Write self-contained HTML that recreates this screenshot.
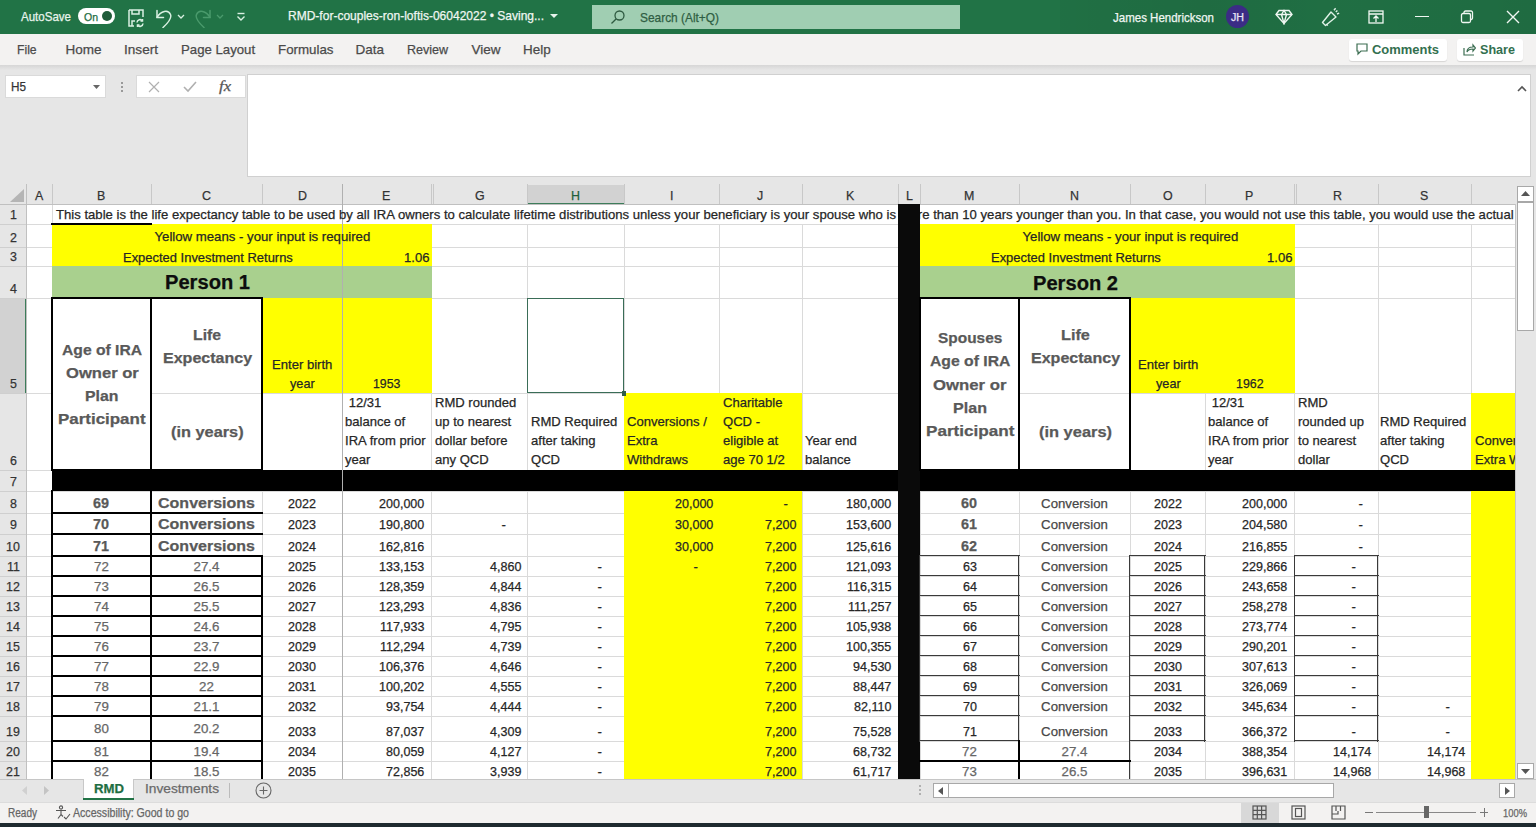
<!DOCTYPE html><html><head><meta charset="utf-8"><style>
html,body{margin:0;padding:0;width:1536px;height:827px;overflow:hidden;background:#fff;position:relative}
body>div,body>svg,div>div,div>svg{position:absolute}
.t{white-space:pre;line-height:1;font-family:"Liberation Sans",sans-serif;-webkit-text-stroke:0.25px currentColor}
</style></head><body>
<div style="left:0px;top:0px;width:1536px;height:34px;background:#217346;"></div>
<div style="left:1060px;top:0px;width:476px;height:34px;background:linear-gradient(90deg,rgba(0,0,0,0.03),rgba(0,0,0,0.07) 30%,rgba(0,0,0,0.04) 60%,rgba(0,0,0,0.07));"></div>
<div style="left:0px;top:34px;width:1536px;height:31px;background:#f3f2f1;"></div>
<div style="left:0px;top:65px;width:1536px;height:122px;background:#e6e6e6;"></div>
<div style="left:0px;top:65px;width:1536px;height:5px;background:linear-gradient(#d6d6d6,#e6e6e6);"></div>
<div class="t" style="left:21.00px;top:10.00px;font-size:13px;color:#e8f3ec;transform:scaleX(0.8870);transform-origin:0 0;">AutoSave</div>
<div style="left:78px;top:8px;width:37px;height:16px;border-radius:8px;background:#fff"></div>
<div class="t" style="left:84.00px;top:11.77px;font-size:11.5px;color:#1f6e43;transform:scaleX(0.9126);transform-origin:0 0;">On</div>
<div style="left:102px;top:11px;width:10px;height:10px;border-radius:5px;background:#1f5c3a"></div>
<svg style="left:126px;top:8px" width="20" height="20" viewBox="0 0 20 20" fill="none" stroke="#d9f0e2" stroke-width="1.5">
<path d="M3 2h14v7"/><path d="M3 2v16h5"/><path d="M6 2v4h7V2"/><path d="M6 18v-5h3"/><path d="M11 14.5a3 3 0 0 1 5.5-1.5M17 15.5a3 3 0 0 1-5.5 1.5"/><path d="M16.5 11v2h-2M11.5 19v-2h2"/></svg>
<svg style="left:155px;top:8px" width="18" height="20" viewBox="0 0 18 20" fill="none" stroke="#d9f0e2" stroke-width="1.5" stroke-linecap="round">
<path d="M2 2.5v7h6.5"/><path d="M2 9.3C6 3 13 1 15.5 6.5C17 10 13 15 8 19.5"/></svg>
<svg style="left:177px;top:14px" width="8" height="6" viewBox="0 0 8 6" fill="none" stroke="#d9f0e2" stroke-width="1.3"><path d="M1 1l3 3 3-3"/></svg>
<svg style="left:194px;top:8px" width="18" height="20" viewBox="0 0 18 20" fill="none" stroke="#4a9a6c" stroke-width="1.5" stroke-linecap="round">
<path d="M16 2.5v7H9.5"/><path d="M16 9.3C12 3 5 1 2.5 6.5C1 10 5 15 10 19.5"/></svg>
<svg style="left:216px;top:14px" width="8" height="6" viewBox="0 0 8 6" fill="none" stroke="#4a9a6c" stroke-width="1.3"><path d="M1 1l3 3 3-3"/></svg>
<svg style="left:236px;top:12px" width="10" height="10" viewBox="0 0 10 10" fill="none" stroke="#d9f0e2" stroke-width="1.4"><path d="M1.5 1.5h7"/><path d="M1.5 4.5l3.5 3.5 3.5-3.5"/></svg>
<div class="t" style="left:288.00px;top:9.00px;font-size:13px;color:#f0f7f2;transform:scaleX(0.9244);transform-origin:0 0;">RMD-for-couples-ron-loftis-06042022 • Saving...</div>
<svg style="left:550px;top:14px" width="8" height="5" viewBox="0 0 8 5"><path d="M0 0h8L4 4z" fill="#e8f3ec"/></svg>
<div style="left:592px;top:5px;width:368px;height:24px;background:#a0ceb2;"></div>
<svg style="left:610px;top:9px" width="16" height="16" viewBox="0 0 16 16" fill="none" stroke="#2e5a40" stroke-width="1.3"><circle cx="9.5" cy="6.5" r="4.5"/><path d="M6.3 9.7L1.5 14.5"/></svg>
<div class="t" style="left:640.00px;top:10.50px;font-size:13px;color:#2f5e43;transform:scaleX(0.9151);transform-origin:0 0;">Search (Alt+Q)</div>
<div class="t" style="left:1113.00px;top:10.50px;font-size:13px;color:#f0f7f2;transform:scaleX(0.8848);transform-origin:0 0;">James Hendrickson</div>
<div style="left:1226px;top:5px;width:23px;height:23px;border-radius:12px;background:#3b2c85"></div>
<div class="t" style="left:1231.00px;top:12.54px;font-size:10px;color:#e8e4f5;transform:scaleX(1.0637);transform-origin:0 0;">JH</div>
<svg style="left:1275px;top:9px" width="18" height="16" viewBox="0 0 18 16" fill="none" stroke="#f0f7f2" stroke-width="1.4"><path d="M4 1.5h10l3 4-8 9-8-9z"/><path d="M1 5.5h16M6.5 5.5L9 14.5l2.5-9M6.5 5.5L9 1.5l2.5 4"/></svg>
<svg style="left:1321px;top:7px" width="20" height="20" viewBox="0 0 20 20" fill="none" stroke="#e0f2e7" stroke-width="1.4" stroke-linejoin="round"><path d="M1.5 15.5L10 5l5 5-10.5 8.5z"/><path d="M5.5 17l1.2 1.6"/><path d="M13 3.2l1.6-2M16 7l2.2-.8M14.8 5l1.6-1.6"/></svg>
<svg style="left:1368px;top:10px" width="16" height="14" viewBox="0 0 16 14" fill="none" stroke="#f0f7f2" stroke-width="1.3"><rect x="1" y="1" width="14" height="12"/><path d="M1 4h14M8 12V6M5.5 8.5L8 6l2.5 2.5"/></svg>
<div style="left:1415px;top:16px;width:14px;height:1.3px;background:#f0f7f2"></div>
<svg style="left:1460px;top:10px" width="14" height="14" viewBox="0 0 14 14" fill="none" stroke="#f0f7f2" stroke-width="1.3"><rect x="1.5" y="3.5" width="9" height="9" rx="1.5"/><path d="M4 3.5V2.5a1.5 1.5 0 0 1 1.5-1.5H11a1.5 1.5 0 0 1 1.5 1.5V8a1.5 1.5 0 0 1-1.5 1.5h-.5"/></svg>
<svg style="left:1506px;top:10px" width="14" height="14" viewBox="0 0 14 14" stroke="#f0f7f2" stroke-width="1.4"><path d="M1 1l12 12M13 1L1 13"/></svg>
<div class="t" style="left:16.50px;top:42.57px;font-size:13.5px;color:#4a4a4a;transform:scaleX(0.9011);transform-origin:0 0;">File</div>
<div class="t" style="left:65.50px;top:42.57px;font-size:13.5px;color:#4a4a4a;">Home</div>
<div class="t" style="left:124.10px;top:42.57px;font-size:13.5px;color:#4a4a4a;transform:scaleX(1.0070);transform-origin:0 0;">Insert</div>
<div class="t" style="left:181.10px;top:42.57px;font-size:13.5px;color:#4a4a4a;transform:scaleX(0.9774);transform-origin:0 0;">Page Layout</div>
<div class="t" style="left:277.50px;top:42.57px;font-size:13.5px;color:#4a4a4a;transform:scaleX(0.9865);transform-origin:0 0;">Formulas</div>
<div class="t" style="left:355.50px;top:42.57px;font-size:13.5px;color:#4a4a4a;">Data</div>
<div class="t" style="left:407.00px;top:42.57px;font-size:13.5px;color:#4a4a4a;transform:scaleX(0.9285);transform-origin:0 0;">Review</div>
<div class="t" style="left:471.50px;top:42.57px;font-size:13.5px;color:#4a4a4a;">View</div>
<div class="t" style="left:522.90px;top:42.57px;font-size:13.5px;color:#4a4a4a;transform:scaleX(0.9941);transform-origin:0 0;">Help</div>
<div style="left:1349px;top:39px;width:98px;height:22px;background:#fff;border-radius:3px;box-shadow:0 1px 1px rgba(0,0,0,.12)"></div>
<div style="left:1457px;top:39px;width:66px;height:22px;background:#fff;border-radius:3px;box-shadow:0 1px 1px rgba(0,0,0,.12)"></div>
<svg style="left:1356px;top:43px" width="12" height="13" viewBox="0 0 12 13" fill="none" stroke="#3c6e52" stroke-width="1.2"><path d="M1 1h10v7H5l-3 3V8H1z"/></svg>
<div class="t" style="left:1372.00px;top:42.77px;font-size:13.5px;color:#33704f;font-weight:bold;transform:scaleX(0.9604);transform-origin:0 0;-webkit-text-stroke:0;">Comments</div>
<svg style="left:1463px;top:42px" width="13" height="14" viewBox="0 0 13 14" fill="none" stroke="#3c6e52" stroke-width="1.2"><path d="M1 6v7h10"/><path d="M4 10c0-4 3-5 6-5V3l2.5 3L10 9V7c-3 0-5 1-6 3z"/></svg>
<div class="t" style="left:1480.00px;top:42.77px;font-size:13.5px;color:#33704f;font-weight:bold;transform:scaleX(0.9328);transform-origin:0 0;-webkit-text-stroke:0;">Share</div>
<div style="left:6px;top:76px;width:99px;height:21px;background:#fff;box-shadow:0 0 0 1px #dadada"></div>
<div class="t" style="left:11.00px;top:80.92px;font-size:12.5px;color:#333;transform:scaleX(0.9387);transform-origin:0 0;">H5</div>
<svg style="left:93px;top:85px" width="7" height="4" viewBox="0 0 7 4"><path d="M0 0h7L3.5 4z" fill="#666"/></svg>
<div style="left:121px;top:82px;width:2px;height:2px;background:#999"></div><div style="left:121px;top:86px;width:2px;height:2px;background:#999"></div><div style="left:121px;top:90px;width:2px;height:2px;background:#999"></div>
<div style="left:137px;top:76px;width:108px;height:21px;background:#fff;box-shadow:0 0 0 1px #dadada"></div>
<svg style="left:148px;top:81px" width="12" height="12" viewBox="0 0 12 12" stroke="#b0b0b0" stroke-width="1.2"><path d="M1 1l10 10M11 1L1 11"/></svg>
<svg style="left:183px;top:81px" width="14" height="12" viewBox="0 0 14 12" fill="none" stroke="#b0b0b0" stroke-width="1.6"><path d="M1 6l4 4 8-9"/></svg>
<div class="t" style="left:219.00px;top:80.15px;font-size:14px;color:#555;transform:scaleX(1.1938);transform-origin:0 0;font-family:'Liberation Serif',serif;font-style:italic;">fx</div>
<div style="left:248px;top:75px;width:1282px;height:101px;background:#fff;box-shadow:0 0 0 1px #d0d0d0"></div>
<svg style="left:1517px;top:85px" width="10" height="7" viewBox="0 0 10 7" fill="none" stroke="#555" stroke-width="1.6"><path d="M1 6l4-4 4 4"/></svg>
<div style="left:0px;top:184px;width:1516px;height:595px;background:#fff;"></div>
<div style="left:0px;top:184px;width:1516px;height:20px;background:#e6e6e6;"></div>
<div style="left:0px;top:204px;width:26px;height:575px;background:#e6e6e6;"></div>
<svg style="left:10px;top:189px" width="14" height="13" viewBox="0 0 14 13"><path d="M14 0v13H0z" fill="#b5b5b5"/></svg>
<div style="left:527px;top:185px;width:98px;height:19px;background:#d2d2d2;"></div>
<div style="left:527px;top:202.5px;width:98px;height:2.0px;background:#3d7d5a;"></div>
<div style="left:0px;top:298px;width:26px;height:95px;background:#d2d2d2;"></div>
<div style="left:25px;top:298px;width:2px;height:95px;background:#3d7d5a;"></div>
<div style="left:52px;top:204px;width:1px;height:575px;background:#dadada;"></div>
<div style="left:151px;top:224px;width:1px;height:555px;background:#dadada;"></div>
<div style="left:262px;top:224px;width:1px;height:555px;background:#dadada;"></div>
<div style="left:342px;top:224px;width:1px;height:555px;background:#dadada;"></div>
<div style="left:431px;top:224px;width:1px;height:555px;background:#dadada;"></div>
<div style="left:527px;top:224px;width:1px;height:555px;background:#dadada;"></div>
<div style="left:624px;top:224px;width:1px;height:555px;background:#dadada;"></div>
<div style="left:719px;top:224px;width:1px;height:555px;background:#dadada;"></div>
<div style="left:802px;top:224px;width:1px;height:555px;background:#dadada;"></div>
<div style="left:898px;top:224px;width:1px;height:555px;background:#dadada;"></div>
<div style="left:920px;top:224px;width:1px;height:555px;background:#dadada;"></div>
<div style="left:1019px;top:224px;width:1px;height:555px;background:#dadada;"></div>
<div style="left:1130px;top:224px;width:1px;height:555px;background:#dadada;"></div>
<div style="left:1205px;top:224px;width:1px;height:555px;background:#dadada;"></div>
<div style="left:1294px;top:224px;width:1px;height:555px;background:#dadada;"></div>
<div style="left:1378px;top:224px;width:1px;height:555px;background:#dadada;"></div>
<div style="left:1471px;top:224px;width:1px;height:555px;background:#dadada;"></div>
<div style="left:26px;top:224px;width:1490px;height:1px;background:#dadada;"></div>
<div style="left:26px;top:247px;width:1490px;height:1px;background:#dadada;"></div>
<div style="left:26px;top:266px;width:1490px;height:1px;background:#dadada;"></div>
<div style="left:26px;top:298px;width:1490px;height:1px;background:#dadada;"></div>
<div style="left:26px;top:393px;width:1490px;height:1px;background:#dadada;"></div>
<div style="left:26px;top:470px;width:1490px;height:1px;background:#dadada;"></div>
<div style="left:26px;top:491px;width:1490px;height:1px;background:#dadada;"></div>
<div style="left:26px;top:513px;width:1490px;height:1px;background:#dadada;"></div>
<div style="left:26px;top:534px;width:1490px;height:1px;background:#dadada;"></div>
<div style="left:26px;top:556px;width:1490px;height:1px;background:#dadada;"></div>
<div style="left:26px;top:576px;width:1490px;height:1px;background:#dadada;"></div>
<div style="left:26px;top:596px;width:1490px;height:1px;background:#dadada;"></div>
<div style="left:26px;top:616px;width:1490px;height:1px;background:#dadada;"></div>
<div style="left:26px;top:636px;width:1490px;height:1px;background:#dadada;"></div>
<div style="left:26px;top:656px;width:1490px;height:1px;background:#dadada;"></div>
<div style="left:26px;top:676px;width:1490px;height:1px;background:#dadada;"></div>
<div style="left:26px;top:696px;width:1490px;height:1px;background:#dadada;"></div>
<div style="left:26px;top:716px;width:1490px;height:1px;background:#dadada;"></div>
<div style="left:26px;top:741px;width:1490px;height:1px;background:#dadada;"></div>
<div style="left:26px;top:761px;width:1490px;height:1px;background:#dadada;"></div>
<div style="left:26px;top:779px;width:1490px;height:1px;background:#dadada;"></div>
<div style="left:52px;top:184px;width:1px;height:20px;background:#c8c8c8;"></div>
<div style="left:151px;top:184px;width:1px;height:20px;background:#c8c8c8;"></div>
<div style="left:262px;top:184px;width:1px;height:20px;background:#c8c8c8;"></div>
<div style="left:342px;top:184px;width:1px;height:20px;background:#c8c8c8;"></div>
<div style="left:431px;top:184px;width:1px;height:20px;background:#c8c8c8;"></div>
<div style="left:527px;top:184px;width:1px;height:20px;background:#c8c8c8;"></div>
<div style="left:624px;top:184px;width:1px;height:20px;background:#c8c8c8;"></div>
<div style="left:719px;top:184px;width:1px;height:20px;background:#c8c8c8;"></div>
<div style="left:802px;top:184px;width:1px;height:20px;background:#c8c8c8;"></div>
<div style="left:898px;top:184px;width:1px;height:20px;background:#c8c8c8;"></div>
<div style="left:920px;top:184px;width:1px;height:20px;background:#c8c8c8;"></div>
<div style="left:1019px;top:184px;width:1px;height:20px;background:#c8c8c8;"></div>
<div style="left:1130px;top:184px;width:1px;height:20px;background:#c8c8c8;"></div>
<div style="left:1205px;top:184px;width:1px;height:20px;background:#c8c8c8;"></div>
<div style="left:1294px;top:184px;width:1px;height:20px;background:#c8c8c8;"></div>
<div style="left:1378px;top:184px;width:1px;height:20px;background:#c8c8c8;"></div>
<div style="left:1471px;top:184px;width:1px;height:20px;background:#c8c8c8;"></div>
<div style="left:431px;top:184px;width:1px;height:20px;background:#c8c8c8;"></div>
<div style="left:433px;top:184px;width:1px;height:20px;background:#c8c8c8;"></div>
<div style="left:1296px;top:184px;width:1px;height:20px;background:#c8c8c8;"></div>
<div style="left:0px;top:204px;width:1516px;height:1px;background:#c0c0c0;"></div>
<div style="left:26px;top:184px;width:1px;height:595px;background:#c0c0c0;"></div>
<div style="left:0px;top:224px;width:26px;height:1px;background:#cfcfcf;"></div>
<div style="left:0px;top:247px;width:26px;height:1px;background:#cfcfcf;"></div>
<div style="left:0px;top:266px;width:26px;height:1px;background:#cfcfcf;"></div>
<div style="left:0px;top:298px;width:26px;height:1px;background:#cfcfcf;"></div>
<div style="left:0px;top:393px;width:26px;height:1px;background:#cfcfcf;"></div>
<div style="left:0px;top:470px;width:26px;height:1px;background:#cfcfcf;"></div>
<div style="left:0px;top:491px;width:26px;height:1px;background:#cfcfcf;"></div>
<div style="left:0px;top:513px;width:26px;height:1px;background:#cfcfcf;"></div>
<div style="left:0px;top:534px;width:26px;height:1px;background:#cfcfcf;"></div>
<div style="left:0px;top:556px;width:26px;height:1px;background:#cfcfcf;"></div>
<div style="left:0px;top:576px;width:26px;height:1px;background:#cfcfcf;"></div>
<div style="left:0px;top:596px;width:26px;height:1px;background:#cfcfcf;"></div>
<div style="left:0px;top:616px;width:26px;height:1px;background:#cfcfcf;"></div>
<div style="left:0px;top:636px;width:26px;height:1px;background:#cfcfcf;"></div>
<div style="left:0px;top:656px;width:26px;height:1px;background:#cfcfcf;"></div>
<div style="left:0px;top:676px;width:26px;height:1px;background:#cfcfcf;"></div>
<div style="left:0px;top:696px;width:26px;height:1px;background:#cfcfcf;"></div>
<div style="left:0px;top:716px;width:26px;height:1px;background:#cfcfcf;"></div>
<div style="left:0px;top:741px;width:26px;height:1px;background:#cfcfcf;"></div>
<div style="left:0px;top:761px;width:26px;height:1px;background:#cfcfcf;"></div>
<div style="left:0px;top:779px;width:26px;height:1px;background:#cfcfcf;"></div>
<div class="t" style="left:34.86px;top:188.57px;font-size:13.5px;color:#333;transform:scaleX(0.9200);transform-origin:0 0;">A</div>
<div class="t" style="left:97.36px;top:188.57px;font-size:13.5px;color:#333;transform:scaleX(0.9200);transform-origin:0 0;">B</div>
<div class="t" style="left:202.02px;top:188.57px;font-size:13.5px;color:#333;transform:scaleX(0.9200);transform-origin:0 0;">C</div>
<div class="t" style="left:297.52px;top:188.57px;font-size:13.5px;color:#333;transform:scaleX(0.9200);transform-origin:0 0;">D</div>
<div class="t" style="left:382.36px;top:188.57px;font-size:13.5px;color:#333;transform:scaleX(0.9200);transform-origin:0 0;">E</div>
<div class="t" style="left:475.17px;top:188.57px;font-size:13.5px;color:#333;transform:scaleX(0.9200);transform-origin:0 0;">G</div>
<div class="t" style="left:571.02px;top:188.57px;font-size:13.5px;color:#1f5f3a;transform:scaleX(0.9200);transform-origin:0 0;">H</div>
<div class="t" style="left:669.77px;top:188.57px;font-size:13.5px;color:#333;transform:scaleX(0.9200);transform-origin:0 0;">I</div>
<div class="t" style="left:757.39px;top:188.57px;font-size:13.5px;color:#333;transform:scaleX(0.9200);transform-origin:0 0;">J</div>
<div class="t" style="left:845.86px;top:188.57px;font-size:13.5px;color:#333;transform:scaleX(0.9200);transform-origin:0 0;">K</div>
<div class="t" style="left:905.55px;top:188.57px;font-size:13.5px;color:#333;transform:scaleX(0.9200);transform-origin:0 0;">L</div>
<div class="t" style="left:964.33px;top:188.57px;font-size:13.5px;color:#333;transform:scaleX(0.9200);transform-origin:0 0;">M</div>
<div class="t" style="left:1070.02px;top:188.57px;font-size:13.5px;color:#333;transform:scaleX(0.9200);transform-origin:0 0;">N</div>
<div class="t" style="left:1162.67px;top:188.57px;font-size:13.5px;color:#333;transform:scaleX(0.9200);transform-origin:0 0;">O</div>
<div class="t" style="left:1245.36px;top:188.57px;font-size:13.5px;color:#333;transform:scaleX(0.9200);transform-origin:0 0;">P</div>
<div class="t" style="left:1333.02px;top:188.57px;font-size:13.5px;color:#333;transform:scaleX(0.9200);transform-origin:0 0;">R</div>
<div class="t" style="left:1420.36px;top:188.57px;font-size:13.5px;color:#333;transform:scaleX(0.9200);transform-origin:0 0;">S</div>
<div class="t" style="left:9.55px;top:207.57px;font-size:13.5px;color:#333;transform:scaleX(0.9200);transform-origin:0 0;">1</div>
<div class="t" style="left:9.55px;top:230.57px;font-size:13.5px;color:#333;transform:scaleX(0.9200);transform-origin:0 0;">2</div>
<div class="t" style="left:9.55px;top:249.57px;font-size:13.5px;color:#333;transform:scaleX(0.9200);transform-origin:0 0;">3</div>
<div class="t" style="left:9.55px;top:281.57px;font-size:13.5px;color:#333;transform:scaleX(0.9200);transform-origin:0 0;">4</div>
<div class="t" style="left:9.55px;top:376.57px;font-size:13.5px;color:#333;transform:scaleX(0.9200);transform-origin:0 0;">5</div>
<div class="t" style="left:9.55px;top:453.57px;font-size:13.5px;color:#333;transform:scaleX(0.9200);transform-origin:0 0;">6</div>
<div class="t" style="left:9.55px;top:474.57px;font-size:13.5px;color:#333;transform:scaleX(0.9200);transform-origin:0 0;">7</div>
<div class="t" style="left:9.55px;top:496.57px;font-size:13.5px;color:#333;transform:scaleX(0.9200);transform-origin:0 0;">8</div>
<div class="t" style="left:9.55px;top:517.57px;font-size:13.5px;color:#333;transform:scaleX(0.9200);transform-origin:0 0;">9</div>
<div class="t" style="left:6.09px;top:539.57px;font-size:13.5px;color:#333;transform:scaleX(0.9200);transform-origin:0 0;">10</div>
<div class="t" style="left:6.55px;top:559.57px;font-size:13.5px;color:#333;transform:scaleX(0.9200);transform-origin:0 0;">11</div>
<div class="t" style="left:6.09px;top:579.57px;font-size:13.5px;color:#333;transform:scaleX(0.9200);transform-origin:0 0;">12</div>
<div class="t" style="left:6.09px;top:599.57px;font-size:13.5px;color:#333;transform:scaleX(0.9200);transform-origin:0 0;">13</div>
<div class="t" style="left:6.09px;top:619.57px;font-size:13.5px;color:#333;transform:scaleX(0.9200);transform-origin:0 0;">14</div>
<div class="t" style="left:6.09px;top:639.57px;font-size:13.5px;color:#333;transform:scaleX(0.9200);transform-origin:0 0;">15</div>
<div class="t" style="left:6.09px;top:659.57px;font-size:13.5px;color:#333;transform:scaleX(0.9200);transform-origin:0 0;">16</div>
<div class="t" style="left:6.09px;top:679.57px;font-size:13.5px;color:#333;transform:scaleX(0.9200);transform-origin:0 0;">17</div>
<div class="t" style="left:6.09px;top:699.57px;font-size:13.5px;color:#333;transform:scaleX(0.9200);transform-origin:0 0;">18</div>
<div class="t" style="left:6.09px;top:724.57px;font-size:13.5px;color:#333;transform:scaleX(0.9200);transform-origin:0 0;">19</div>
<div class="t" style="left:6.09px;top:744.57px;font-size:13.5px;color:#333;transform:scaleX(0.9200);transform-origin:0 0;">20</div>
<div class="t" style="left:6.09px;top:764.57px;font-size:13.5px;color:#333;transform:scaleX(0.9200);transform-origin:0 0;">21</div>
<div style="left:52px;top:298px;width:99px;height:172px;background:#fff;"></div>
<div style="left:920px;top:298px;width:99px;height:172px;background:#fff;"></div>
<div style="left:52px;top:224px;width:380px;height:42px;background:#ffff00;"></div>
<div style="left:920px;top:224px;width:375px;height:42px;background:#ffff00;"></div>
<div style="left:52px;top:266px;width:380px;height:32px;background:#a9d08e;"></div>
<div style="left:920px;top:266px;width:375px;height:32px;background:#a9d08e;"></div>
<div style="left:262px;top:298px;width:170px;height:95px;background:#ffff00;"></div>
<div style="left:1130px;top:298px;width:165px;height:95px;background:#ffff00;"></div>
<div style="left:624px;top:393px;width:178px;height:77px;background:#ffff00;"></div>
<div style="left:1471px;top:393px;width:45px;height:77px;background:#ffff00;"></div>
<div style="left:52px;top:470px;width:1464px;height:21px;background:#000;"></div>
<div style="left:898px;top:204px;width:22px;height:575px;background:#0a0a0a;"></div>
<div style="left:624px;top:491px;width:178px;height:288px;background:#ffff00;"></div>
<div style="left:1471px;top:491px;width:45px;height:288px;background:#ffff00;"></div>
<div style="left:342px;top:184px;width:1px;height:595px;background:#b0b0b0;"></div>
<div style="left:51px;top:223px;width:101px;height:2px;background:#000;"></div>
<div style="left:51px;top:297px;width:2px;height:174px;background:#000;"></div>
<div style="left:150px;top:297px;width:2px;height:174px;background:#000;"></div>
<div style="left:261px;top:297px;width:2px;height:174px;background:#000;"></div>
<div style="left:51px;top:297px;width:212px;height:2px;background:#000;"></div>
<div style="left:51px;top:469px;width:212px;height:2px;background:#000;"></div>
<div style="left:51px;top:490px;width:2px;height:290px;background:#000;"></div>
<div style="left:150px;top:490px;width:2px;height:290px;background:#000;"></div>
<div style="left:261px;top:555px;width:2px;height:225px;background:#000;"></div>
<div style="left:51px;top:512px;width:212px;height:2px;background:#000;"></div>
<div style="left:51px;top:533px;width:212px;height:2px;background:#000;"></div>
<div style="left:51px;top:555px;width:212px;height:2px;background:#000;"></div>
<div style="left:51px;top:575px;width:212px;height:2px;background:#000;"></div>
<div style="left:51px;top:595px;width:212px;height:2px;background:#000;"></div>
<div style="left:51px;top:615px;width:212px;height:2px;background:#000;"></div>
<div style="left:51px;top:635px;width:212px;height:2px;background:#000;"></div>
<div style="left:51px;top:655px;width:212px;height:2px;background:#000;"></div>
<div style="left:51px;top:675px;width:212px;height:2px;background:#000;"></div>
<div style="left:51px;top:695px;width:212px;height:2px;background:#000;"></div>
<div style="left:51px;top:715px;width:212px;height:2px;background:#000;"></div>
<div style="left:51px;top:740px;width:212px;height:2px;background:#000;"></div>
<div style="left:51px;top:760px;width:212px;height:2px;background:#000;"></div>
<div style="left:919px;top:297px;width:2px;height:174px;background:#000;"></div>
<div style="left:1018px;top:297px;width:2px;height:174px;background:#000;"></div>
<div style="left:1129px;top:297px;width:2px;height:174px;background:#000;"></div>
<div style="left:919px;top:297px;width:212px;height:2px;background:#000;"></div>
<div style="left:919px;top:469px;width:212px;height:2px;background:#000;"></div>
<div style="left:919px;top:555px;width:1px;height:187px;background:#3a3a3a;"></div>
<div style="left:1018px;top:555px;width:1px;height:187px;background:#3a3a3a;"></div>
<div style="left:919px;top:555px;width:101px;height:1px;background:#3a3a3a;"></div>
<div style="left:919px;top:575px;width:101px;height:1px;background:#3a3a3a;"></div>
<div style="left:919px;top:595px;width:101px;height:1px;background:#3a3a3a;"></div>
<div style="left:919px;top:615px;width:101px;height:1px;background:#3a3a3a;"></div>
<div style="left:919px;top:635px;width:101px;height:1px;background:#3a3a3a;"></div>
<div style="left:919px;top:655px;width:101px;height:1px;background:#3a3a3a;"></div>
<div style="left:919px;top:675px;width:101px;height:1px;background:#3a3a3a;"></div>
<div style="left:919px;top:695px;width:101px;height:1px;background:#3a3a3a;"></div>
<div style="left:919px;top:715px;width:101px;height:1px;background:#3a3a3a;"></div>
<div style="left:919px;top:740px;width:101px;height:1px;background:#3a3a3a;"></div>
<div style="left:1129px;top:555px;width:1px;height:187px;background:#3a3a3a;"></div>
<div style="left:1204px;top:555px;width:1px;height:187px;background:#3a3a3a;"></div>
<div style="left:1129px;top:555px;width:77px;height:1px;background:#3a3a3a;"></div>
<div style="left:1129px;top:575px;width:77px;height:1px;background:#3a3a3a;"></div>
<div style="left:1129px;top:595px;width:77px;height:1px;background:#3a3a3a;"></div>
<div style="left:1129px;top:615px;width:77px;height:1px;background:#3a3a3a;"></div>
<div style="left:1129px;top:635px;width:77px;height:1px;background:#3a3a3a;"></div>
<div style="left:1129px;top:655px;width:77px;height:1px;background:#3a3a3a;"></div>
<div style="left:1129px;top:675px;width:77px;height:1px;background:#3a3a3a;"></div>
<div style="left:1129px;top:695px;width:77px;height:1px;background:#3a3a3a;"></div>
<div style="left:1129px;top:715px;width:77px;height:1px;background:#3a3a3a;"></div>
<div style="left:1129px;top:740px;width:77px;height:1px;background:#3a3a3a;"></div>
<div style="left:1294px;top:555px;width:1px;height:187px;background:#3a3a3a;"></div>
<div style="left:1377px;top:555px;width:1px;height:187px;background:#3a3a3a;"></div>
<div style="left:1294px;top:555px;width:85px;height:1px;background:#3a3a3a;"></div>
<div style="left:1294px;top:575px;width:85px;height:1px;background:#3a3a3a;"></div>
<div style="left:1294px;top:595px;width:85px;height:1px;background:#3a3a3a;"></div>
<div style="left:1294px;top:615px;width:85px;height:1px;background:#3a3a3a;"></div>
<div style="left:1294px;top:635px;width:85px;height:1px;background:#3a3a3a;"></div>
<div style="left:1294px;top:655px;width:85px;height:1px;background:#3a3a3a;"></div>
<div style="left:1294px;top:675px;width:85px;height:1px;background:#3a3a3a;"></div>
<div style="left:1294px;top:695px;width:85px;height:1px;background:#3a3a3a;"></div>
<div style="left:1294px;top:715px;width:85px;height:1px;background:#3a3a3a;"></div>
<div style="left:1294px;top:740px;width:85px;height:1px;background:#3a3a3a;"></div>
<div style="left:1129px;top:740px;width:1px;height:40px;background:#3a3a3a;"></div>
<div style="left:1018px;top:740px;width:2px;height:40px;background:#000;"></div>
<div style="left:919px;top:760px;width:212px;height:2px;background:#000;"></div>
<div style="left:527px;top:298px;width:94.5px;height:93px;border:1.6px solid #3a6d57"></div>
<div style="left:621.5px;top:391px;width:4.5px;height:4.5px;background:#2f5e4a;"></div>
<div class="t" style="left:56.00px;top:207.83px;font-size:13.2px;color:#262626;transform:scaleX(0.9947);transform-origin:0 0;">This table is the life expectancy table to be used by all IRA owners to calculate lifetime distributions unless your beneficiary is your spouse who is more than 10 years younger than you. In that case, you would not use this table, you would use the actual</div>
<div style="left:898px;top:204px;width:22px;height:20px;background:#0a0a0a;"></div>
<div class="t" style="left:154.50px;top:229.83px;font-size:13.2px;color:#262626;">Yellow means - your input is required</div>
<div class="t" style="left:123.00px;top:250.83px;font-size:13.2px;color:#262626;transform:scaleX(0.9818);transform-origin:0 0;">Expected Investment Returns</div>
<div class="t" style="left:403.50px;top:250.83px;font-size:13.2px;color:#262626;transform:scaleX(0.9925);transform-origin:0 0;">1.06</div>
<div class="t" style="left:165.00px;top:273.49px;font-size:19.5px;color:#0d0d0d;font-weight:bold;transform:scaleX(1.0319);transform-origin:0 0;">Person 1</div>
<div class="t" style="left:1022.50px;top:229.83px;font-size:13.2px;color:#262626;">Yellow means - your input is required</div>
<div class="t" style="left:990.50px;top:250.83px;font-size:13.2px;color:#262626;transform:scaleX(0.9818);transform-origin:0 0;">Expected Investment Returns</div>
<div class="t" style="left:1267.00px;top:250.83px;font-size:13.2px;color:#262626;transform:scaleX(0.9925);transform-origin:0 0;">1.06</div>
<div class="t" style="left:1033.00px;top:273.99px;font-size:19.5px;color:#0d0d0d;font-weight:bold;transform:scaleX(1.0319);transform-origin:0 0;">Person 2</div>
<div class="t" style="left:62.20px;top:342.10px;font-size:15.0px;color:#595959;font-weight:bold;transform:scaleX(1.0450);transform-origin:0 0;">Age of IRA</div>
<div class="t" style="left:65.80px;top:365.10px;font-size:15.0px;color:#595959;font-weight:bold;transform:scaleX(1.1055);transform-origin:0 0;">Owner or</div>
<div class="t" style="left:85.00px;top:388.00px;font-size:15.0px;color:#595959;font-weight:bold;transform:scaleX(1.0568);transform-origin:0 0;">Plan</div>
<div class="t" style="left:58.10px;top:411.10px;font-size:15.0px;color:#595959;font-weight:bold;transform:scaleX(1.1290);transform-origin:0 0;">Participant</div>
<div class="t" style="left:193.20px;top:327.00px;font-size:15.0px;color:#595959;font-weight:bold;transform:scaleX(1.0507);transform-origin:0 0;">Life</div>
<div class="t" style="left:162.70px;top:349.50px;font-size:15.0px;color:#595959;font-weight:bold;transform:scaleX(1.0683);transform-origin:0 0;">Expectancy</div>
<div class="t" style="left:170.90px;top:424.20px;font-size:15.0px;color:#595959;font-weight:bold;transform:scaleX(1.0885);transform-origin:0 0;">(in years)</div>
<div class="t" style="left:937.80px;top:329.70px;font-size:15.0px;color:#595959;font-weight:bold;transform:scaleX(1.0288);transform-origin:0 0;">Spouses</div>
<div class="t" style="left:929.70px;top:352.60px;font-size:15.0px;color:#595959;font-weight:bold;transform:scaleX(1.0489);transform-origin:0 0;">Age of IRA</div>
<div class="t" style="left:933.20px;top:376.50px;font-size:15.0px;color:#595959;font-weight:bold;transform:scaleX(1.1162);transform-origin:0 0;">Owner or</div>
<div class="t" style="left:952.70px;top:400.20px;font-size:15.0px;color:#595959;font-weight:bold;transform:scaleX(1.0726);transform-origin:0 0;">Plan</div>
<div class="t" style="left:925.60px;top:422.50px;font-size:15.0px;color:#595959;font-weight:bold;transform:scaleX(1.1406);transform-origin:0 0;">Participant</div>
<div class="t" style="left:1060.70px;top:327.00px;font-size:15.0px;color:#595959;font-weight:bold;transform:scaleX(1.0807);transform-origin:0 0;">Life</div>
<div class="t" style="left:1030.50px;top:349.90px;font-size:15.0px;color:#595959;font-weight:bold;transform:scaleX(1.0683);transform-origin:0 0;">Expectancy</div>
<div class="t" style="left:1039.00px;top:424.30px;font-size:15.0px;color:#595959;font-weight:bold;transform:scaleX(1.0945);transform-origin:0 0;">(in years)</div>
<div class="t" style="left:271.80px;top:358.23px;font-size:13.2px;color:#262626;transform:scaleX(0.9918);transform-origin:0 0;">Enter birth</div>
<div class="t" style="left:290.00px;top:377.33px;font-size:13.2px;color:#262626;transform:scaleX(0.9611);transform-origin:0 0;">year</div>
<div class="t" style="left:372.80px;top:377.23px;font-size:13.2px;color:#262626;transform:scaleX(0.9336);transform-origin:0 0;">1953</div>
<div class="t" style="left:1137.50px;top:357.93px;font-size:13.2px;color:#262626;transform:scaleX(0.9918);transform-origin:0 0;">Enter birth</div>
<div class="t" style="left:1155.60px;top:376.83px;font-size:13.2px;color:#262626;transform:scaleX(0.9611);transform-origin:0 0;">year</div>
<div class="t" style="left:1235.70px;top:376.83px;font-size:13.2px;color:#262626;transform:scaleX(0.9404);transform-origin:0 0;">1962</div>
<div class="t" style="left:344.80px;top:395.73px;font-size:13.2px;color:#262626;transform:scaleX(0.9900);transform-origin:0 0;"> 12/31</div>
<div class="t" style="left:344.80px;top:414.83px;font-size:13.2px;color:#262626;transform:scaleX(0.9900);transform-origin:0 0;">balance of</div>
<div class="t" style="left:344.80px;top:433.93px;font-size:13.2px;color:#262626;transform:scaleX(0.9900);transform-origin:0 0;">IRA from prior</div>
<div class="t" style="left:344.80px;top:453.03px;font-size:13.2px;color:#262626;transform:scaleX(0.9900);transform-origin:0 0;">year</div>
<div class="t" style="left:434.80px;top:395.73px;font-size:13.2px;color:#262626;transform:scaleX(0.9900);transform-origin:0 0;">RMD rounded</div>
<div class="t" style="left:434.80px;top:414.83px;font-size:13.2px;color:#262626;transform:scaleX(0.9900);transform-origin:0 0;">up to nearest</div>
<div class="t" style="left:434.80px;top:433.93px;font-size:13.2px;color:#262626;transform:scaleX(0.9900);transform-origin:0 0;">dollar before</div>
<div class="t" style="left:434.80px;top:453.03px;font-size:13.2px;color:#262626;transform:scaleX(0.9900);transform-origin:0 0;">any QCD</div>
<div class="t" style="left:530.80px;top:414.83px;font-size:13.2px;color:#262626;transform:scaleX(0.9900);transform-origin:0 0;">RMD Required</div>
<div class="t" style="left:530.80px;top:433.93px;font-size:13.2px;color:#262626;transform:scaleX(0.9900);transform-origin:0 0;">after taking</div>
<div class="t" style="left:530.80px;top:453.03px;font-size:13.2px;color:#262626;transform:scaleX(0.9900);transform-origin:0 0;">QCD</div>
<div class="t" style="left:627.30px;top:414.83px;font-size:13.2px;color:#262626;transform:scaleX(0.9900);transform-origin:0 0;">Conversions /</div>
<div class="t" style="left:627.30px;top:433.93px;font-size:13.2px;color:#262626;transform:scaleX(0.9900);transform-origin:0 0;">Extra</div>
<div class="t" style="left:627.30px;top:453.03px;font-size:13.2px;color:#262626;transform:scaleX(0.9900);transform-origin:0 0;">Withdraws</div>
<div class="t" style="left:722.80px;top:395.73px;font-size:13.2px;color:#262626;transform:scaleX(0.9900);transform-origin:0 0;">Charitable</div>
<div class="t" style="left:722.80px;top:414.83px;font-size:13.2px;color:#262626;transform:scaleX(0.9900);transform-origin:0 0;">QCD -</div>
<div class="t" style="left:722.80px;top:433.93px;font-size:13.2px;color:#262626;transform:scaleX(0.9900);transform-origin:0 0;">eligible at</div>
<div class="t" style="left:722.80px;top:453.03px;font-size:13.2px;color:#262626;transform:scaleX(0.9900);transform-origin:0 0;">age 70 1/2</div>
<div class="t" style="left:805.30px;top:433.93px;font-size:13.2px;color:#262626;transform:scaleX(0.9900);transform-origin:0 0;">Year end</div>
<div class="t" style="left:805.30px;top:453.03px;font-size:13.2px;color:#262626;transform:scaleX(0.9900);transform-origin:0 0;">balance</div>
<div class="t" style="left:1207.80px;top:395.73px;font-size:13.2px;color:#262626;transform:scaleX(0.9900);transform-origin:0 0;"> 12/31</div>
<div class="t" style="left:1207.80px;top:414.83px;font-size:13.2px;color:#262626;transform:scaleX(0.9900);transform-origin:0 0;">balance of</div>
<div class="t" style="left:1207.80px;top:433.93px;font-size:13.2px;color:#262626;transform:scaleX(0.9900);transform-origin:0 0;">IRA from prior</div>
<div class="t" style="left:1207.80px;top:453.03px;font-size:13.2px;color:#262626;transform:scaleX(0.9900);transform-origin:0 0;">year</div>
<div class="t" style="left:1298.30px;top:395.73px;font-size:13.2px;color:#262626;transform:scaleX(0.9900);transform-origin:0 0;">RMD</div>
<div class="t" style="left:1298.30px;top:414.83px;font-size:13.2px;color:#262626;transform:scaleX(0.9900);transform-origin:0 0;">rounded up</div>
<div class="t" style="left:1298.30px;top:433.93px;font-size:13.2px;color:#262626;transform:scaleX(0.9900);transform-origin:0 0;">to nearest</div>
<div class="t" style="left:1298.30px;top:453.03px;font-size:13.2px;color:#262626;transform:scaleX(0.9900);transform-origin:0 0;">dollar</div>
<div class="t" style="left:1380.30px;top:414.83px;font-size:13.2px;color:#262626;transform:scaleX(0.9900);transform-origin:0 0;">RMD Required</div>
<div class="t" style="left:1380.30px;top:433.93px;font-size:13.2px;color:#262626;transform:scaleX(0.9900);transform-origin:0 0;">after taking</div>
<div class="t" style="left:1380.30px;top:453.03px;font-size:13.2px;color:#262626;transform:scaleX(0.9900);transform-origin:0 0;">QCD</div>
<div style="left:1471px;top:393px;width:44px;height:77px;overflow:hidden">
<div class="t" style="left:3.80px;top:40.93px;font-size:13.2px;color:#262626;transform:scaleX(0.9900);transform-origin:0 0;">Conversions /</div>
<div class="t" style="left:3.80px;top:60.03px;font-size:13.2px;color:#262626;transform:scaleX(0.9900);transform-origin:0 0;">Extra Withdraws</div>
</div>
<div class="t" style="left:93.48px;top:494.88px;font-size:15.5px;color:#595959;font-weight:bold;transform:scaleX(0.9300);transform-origin:0 0;">69</div>
<div class="t" style="left:158.00px;top:494.88px;font-size:15.5px;color:#595959;font-weight:bold;transform:scaleX(1.0332);transform-origin:0 0;">Conversions</div>
<div class="t" style="left:961.48px;top:494.88px;font-size:15.5px;color:#595959;font-weight:bold;transform:scaleX(0.9300);transform-origin:0 0;">60</div>
<div class="t" style="left:288.05px;top:496.83px;font-size:13.2px;color:#262626;transform:scaleX(0.9500);transform-origin:0 0;">2022</div>
<div class="t" style="left:378.67px;top:496.83px;font-size:13.2px;color:#262626;transform:scaleX(0.9500);transform-origin:0 0;">200,000</div>
<div class="t" style="left:674.64px;top:496.83px;font-size:13.2px;color:#262626;transform:scaleX(0.9500);transform-origin:0 0;">20,000</div>
<div class="t" style="left:783.60px;top:496.83px;font-size:13.2px;color:#262626;">-</div>
<div class="t" style="left:845.67px;top:496.83px;font-size:13.2px;color:#262626;transform:scaleX(0.9500);transform-origin:0 0;">180,000</div>
<div class="t" style="left:1041.12px;top:496.83px;font-size:13.2px;color:#474747;">Conversion</div>
<div class="t" style="left:1154.05px;top:496.83px;font-size:13.2px;color:#262626;transform:scaleX(0.9500);transform-origin:0 0;">2022</div>
<div class="t" style="left:1241.67px;top:496.83px;font-size:13.2px;color:#262626;transform:scaleX(0.9500);transform-origin:0 0;">200,000</div>
<div class="t" style="left:1358.60px;top:496.83px;font-size:13.2px;color:#262626;">-</div>
<div class="t" style="left:93.48px;top:515.88px;font-size:15.5px;color:#595959;font-weight:bold;transform:scaleX(0.9300);transform-origin:0 0;">70</div>
<div class="t" style="left:158.00px;top:515.88px;font-size:15.5px;color:#595959;font-weight:bold;transform:scaleX(1.0332);transform-origin:0 0;">Conversions</div>
<div class="t" style="left:961.48px;top:515.88px;font-size:15.5px;color:#595959;font-weight:bold;transform:scaleX(0.9300);transform-origin:0 0;">61</div>
<div class="t" style="left:288.05px;top:517.83px;font-size:13.2px;color:#262626;transform:scaleX(0.9500);transform-origin:0 0;">2023</div>
<div class="t" style="left:378.67px;top:517.83px;font-size:13.2px;color:#262626;transform:scaleX(0.9500);transform-origin:0 0;">190,800</div>
<div class="t" style="left:501.60px;top:517.83px;font-size:13.2px;color:#262626;">-</div>
<div class="t" style="left:674.64px;top:517.83px;font-size:13.2px;color:#262626;transform:scaleX(0.9500);transform-origin:0 0;">30,000</div>
<div class="t" style="left:764.62px;top:517.83px;font-size:13.2px;color:#262626;transform:scaleX(0.9500);transform-origin:0 0;">7,200</div>
<div class="t" style="left:845.67px;top:517.83px;font-size:13.2px;color:#262626;transform:scaleX(0.9500);transform-origin:0 0;">153,600</div>
<div class="t" style="left:1041.12px;top:517.83px;font-size:13.2px;color:#474747;">Conversion</div>
<div class="t" style="left:1154.05px;top:517.83px;font-size:13.2px;color:#262626;transform:scaleX(0.9500);transform-origin:0 0;">2023</div>
<div class="t" style="left:1241.67px;top:517.83px;font-size:13.2px;color:#262626;transform:scaleX(0.9500);transform-origin:0 0;">204,580</div>
<div class="t" style="left:1358.60px;top:517.83px;font-size:13.2px;color:#262626;">-</div>
<div class="t" style="left:93.48px;top:537.88px;font-size:15.5px;color:#595959;font-weight:bold;transform:scaleX(0.9300);transform-origin:0 0;">71</div>
<div class="t" style="left:158.00px;top:537.88px;font-size:15.5px;color:#595959;font-weight:bold;transform:scaleX(1.0332);transform-origin:0 0;">Conversions</div>
<div class="t" style="left:961.48px;top:537.88px;font-size:15.5px;color:#595959;font-weight:bold;transform:scaleX(0.9300);transform-origin:0 0;">62</div>
<div class="t" style="left:288.05px;top:539.83px;font-size:13.2px;color:#262626;transform:scaleX(0.9500);transform-origin:0 0;">2024</div>
<div class="t" style="left:378.67px;top:539.83px;font-size:13.2px;color:#262626;transform:scaleX(0.9500);transform-origin:0 0;">162,816</div>
<div class="t" style="left:674.64px;top:539.83px;font-size:13.2px;color:#262626;transform:scaleX(0.9500);transform-origin:0 0;">30,000</div>
<div class="t" style="left:764.62px;top:539.83px;font-size:13.2px;color:#262626;transform:scaleX(0.9500);transform-origin:0 0;">7,200</div>
<div class="t" style="left:845.67px;top:539.83px;font-size:13.2px;color:#262626;transform:scaleX(0.9500);transform-origin:0 0;">125,616</div>
<div class="t" style="left:1041.12px;top:539.83px;font-size:13.2px;color:#474747;">Conversion</div>
<div class="t" style="left:1154.05px;top:539.83px;font-size:13.2px;color:#262626;transform:scaleX(0.9500);transform-origin:0 0;">2024</div>
<div class="t" style="left:1241.67px;top:539.83px;font-size:13.2px;color:#262626;transform:scaleX(0.9500);transform-origin:0 0;">216,855</div>
<div class="t" style="left:1358.60px;top:539.83px;font-size:13.2px;color:#262626;">-</div>
<div class="t" style="left:94.10px;top:559.72px;font-size:13.33px;color:#666666;">72</div>
<div class="t" style="left:193.56px;top:559.72px;font-size:13.33px;color:#666666;">27.4</div>
<div class="t" style="left:962.53px;top:559.83px;font-size:13.2px;color:#262626;transform:scaleX(0.9500);transform-origin:0 0;">63</div>
<div class="t" style="left:288.05px;top:559.83px;font-size:13.2px;color:#262626;transform:scaleX(0.9500);transform-origin:0 0;">2025</div>
<div class="t" style="left:378.67px;top:559.83px;font-size:13.2px;color:#262626;transform:scaleX(0.9500);transform-origin:0 0;">133,153</div>
<div class="t" style="left:489.62px;top:559.83px;font-size:13.2px;color:#262626;transform:scaleX(0.9500);transform-origin:0 0;">4,860</div>
<div class="t" style="left:597.60px;top:559.83px;font-size:13.2px;color:#262626;">-</div>
<div class="t" style="left:693.60px;top:559.83px;font-size:13.2px;color:#262626;">-</div>
<div class="t" style="left:764.62px;top:559.83px;font-size:13.2px;color:#262626;transform:scaleX(0.9500);transform-origin:0 0;">7,200</div>
<div class="t" style="left:845.67px;top:559.83px;font-size:13.2px;color:#262626;transform:scaleX(0.9500);transform-origin:0 0;">121,093</div>
<div class="t" style="left:1041.12px;top:559.83px;font-size:13.2px;color:#474747;">Conversion</div>
<div class="t" style="left:1154.05px;top:559.83px;font-size:13.2px;color:#262626;transform:scaleX(0.9500);transform-origin:0 0;">2025</div>
<div class="t" style="left:1241.67px;top:559.83px;font-size:13.2px;color:#262626;transform:scaleX(0.9500);transform-origin:0 0;">229,866</div>
<div class="t" style="left:1351.60px;top:559.83px;font-size:13.2px;color:#262626;">-</div>
<div class="t" style="left:94.10px;top:579.72px;font-size:13.33px;color:#666666;">73</div>
<div class="t" style="left:193.56px;top:579.72px;font-size:13.33px;color:#666666;">26.5</div>
<div class="t" style="left:962.53px;top:579.83px;font-size:13.2px;color:#262626;transform:scaleX(0.9500);transform-origin:0 0;">64</div>
<div class="t" style="left:288.05px;top:579.83px;font-size:13.2px;color:#262626;transform:scaleX(0.9500);transform-origin:0 0;">2026</div>
<div class="t" style="left:378.67px;top:579.83px;font-size:13.2px;color:#262626;transform:scaleX(0.9500);transform-origin:0 0;">128,359</div>
<div class="t" style="left:489.62px;top:579.83px;font-size:13.2px;color:#262626;transform:scaleX(0.9500);transform-origin:0 0;">4,844</div>
<div class="t" style="left:597.60px;top:579.83px;font-size:13.2px;color:#262626;">-</div>
<div class="t" style="left:764.62px;top:579.83px;font-size:13.2px;color:#262626;transform:scaleX(0.9500);transform-origin:0 0;">7,200</div>
<div class="t" style="left:846.60px;top:579.83px;font-size:13.2px;color:#262626;transform:scaleX(0.9500);transform-origin:0 0;">116,315</div>
<div class="t" style="left:1041.12px;top:579.83px;font-size:13.2px;color:#474747;">Conversion</div>
<div class="t" style="left:1154.05px;top:579.83px;font-size:13.2px;color:#262626;transform:scaleX(0.9500);transform-origin:0 0;">2026</div>
<div class="t" style="left:1241.67px;top:579.83px;font-size:13.2px;color:#262626;transform:scaleX(0.9500);transform-origin:0 0;">243,658</div>
<div class="t" style="left:1351.60px;top:579.83px;font-size:13.2px;color:#262626;">-</div>
<div class="t" style="left:94.10px;top:599.72px;font-size:13.33px;color:#666666;">74</div>
<div class="t" style="left:193.56px;top:599.72px;font-size:13.33px;color:#666666;">25.5</div>
<div class="t" style="left:962.53px;top:599.83px;font-size:13.2px;color:#262626;transform:scaleX(0.9500);transform-origin:0 0;">65</div>
<div class="t" style="left:288.05px;top:599.83px;font-size:13.2px;color:#262626;transform:scaleX(0.9500);transform-origin:0 0;">2027</div>
<div class="t" style="left:378.67px;top:599.83px;font-size:13.2px;color:#262626;transform:scaleX(0.9500);transform-origin:0 0;">123,293</div>
<div class="t" style="left:489.62px;top:599.83px;font-size:13.2px;color:#262626;transform:scaleX(0.9500);transform-origin:0 0;">4,836</div>
<div class="t" style="left:597.60px;top:599.83px;font-size:13.2px;color:#262626;">-</div>
<div class="t" style="left:764.62px;top:599.83px;font-size:13.2px;color:#262626;transform:scaleX(0.9500);transform-origin:0 0;">7,200</div>
<div class="t" style="left:847.53px;top:599.83px;font-size:13.2px;color:#262626;transform:scaleX(0.9500);transform-origin:0 0;">111,257</div>
<div class="t" style="left:1041.12px;top:599.83px;font-size:13.2px;color:#474747;">Conversion</div>
<div class="t" style="left:1154.05px;top:599.83px;font-size:13.2px;color:#262626;transform:scaleX(0.9500);transform-origin:0 0;">2027</div>
<div class="t" style="left:1241.67px;top:599.83px;font-size:13.2px;color:#262626;transform:scaleX(0.9500);transform-origin:0 0;">258,278</div>
<div class="t" style="left:1351.60px;top:599.83px;font-size:13.2px;color:#262626;">-</div>
<div class="t" style="left:94.10px;top:619.72px;font-size:13.33px;color:#666666;">75</div>
<div class="t" style="left:193.56px;top:619.72px;font-size:13.33px;color:#666666;">24.6</div>
<div class="t" style="left:962.53px;top:619.83px;font-size:13.2px;color:#262626;transform:scaleX(0.9500);transform-origin:0 0;">66</div>
<div class="t" style="left:288.05px;top:619.83px;font-size:13.2px;color:#262626;transform:scaleX(0.9500);transform-origin:0 0;">2028</div>
<div class="t" style="left:379.60px;top:619.83px;font-size:13.2px;color:#262626;transform:scaleX(0.9500);transform-origin:0 0;">117,933</div>
<div class="t" style="left:489.62px;top:619.83px;font-size:13.2px;color:#262626;transform:scaleX(0.9500);transform-origin:0 0;">4,795</div>
<div class="t" style="left:597.60px;top:619.83px;font-size:13.2px;color:#262626;">-</div>
<div class="t" style="left:764.62px;top:619.83px;font-size:13.2px;color:#262626;transform:scaleX(0.9500);transform-origin:0 0;">7,200</div>
<div class="t" style="left:845.67px;top:619.83px;font-size:13.2px;color:#262626;transform:scaleX(0.9500);transform-origin:0 0;">105,938</div>
<div class="t" style="left:1041.12px;top:619.83px;font-size:13.2px;color:#474747;">Conversion</div>
<div class="t" style="left:1154.05px;top:619.83px;font-size:13.2px;color:#262626;transform:scaleX(0.9500);transform-origin:0 0;">2028</div>
<div class="t" style="left:1241.67px;top:619.83px;font-size:13.2px;color:#262626;transform:scaleX(0.9500);transform-origin:0 0;">273,774</div>
<div class="t" style="left:1351.60px;top:619.83px;font-size:13.2px;color:#262626;">-</div>
<div class="t" style="left:94.10px;top:639.72px;font-size:13.33px;color:#666666;">76</div>
<div class="t" style="left:193.56px;top:639.72px;font-size:13.33px;color:#666666;">23.7</div>
<div class="t" style="left:962.53px;top:639.83px;font-size:13.2px;color:#262626;transform:scaleX(0.9500);transform-origin:0 0;">67</div>
<div class="t" style="left:288.05px;top:639.83px;font-size:13.2px;color:#262626;transform:scaleX(0.9500);transform-origin:0 0;">2029</div>
<div class="t" style="left:379.60px;top:639.83px;font-size:13.2px;color:#262626;transform:scaleX(0.9500);transform-origin:0 0;">112,294</div>
<div class="t" style="left:489.62px;top:639.83px;font-size:13.2px;color:#262626;transform:scaleX(0.9500);transform-origin:0 0;">4,739</div>
<div class="t" style="left:597.60px;top:639.83px;font-size:13.2px;color:#262626;">-</div>
<div class="t" style="left:764.62px;top:639.83px;font-size:13.2px;color:#262626;transform:scaleX(0.9500);transform-origin:0 0;">7,200</div>
<div class="t" style="left:845.67px;top:639.83px;font-size:13.2px;color:#262626;transform:scaleX(0.9500);transform-origin:0 0;">100,355</div>
<div class="t" style="left:1041.12px;top:639.83px;font-size:13.2px;color:#474747;">Conversion</div>
<div class="t" style="left:1154.05px;top:639.83px;font-size:13.2px;color:#262626;transform:scaleX(0.9500);transform-origin:0 0;">2029</div>
<div class="t" style="left:1241.67px;top:639.83px;font-size:13.2px;color:#262626;transform:scaleX(0.9500);transform-origin:0 0;">290,201</div>
<div class="t" style="left:1351.60px;top:639.83px;font-size:13.2px;color:#262626;">-</div>
<div class="t" style="left:94.10px;top:659.72px;font-size:13.33px;color:#666666;">77</div>
<div class="t" style="left:193.56px;top:659.72px;font-size:13.33px;color:#666666;">22.9</div>
<div class="t" style="left:962.53px;top:659.83px;font-size:13.2px;color:#262626;transform:scaleX(0.9500);transform-origin:0 0;">68</div>
<div class="t" style="left:288.05px;top:659.83px;font-size:13.2px;color:#262626;transform:scaleX(0.9500);transform-origin:0 0;">2030</div>
<div class="t" style="left:378.67px;top:659.83px;font-size:13.2px;color:#262626;transform:scaleX(0.9500);transform-origin:0 0;">106,376</div>
<div class="t" style="left:489.62px;top:659.83px;font-size:13.2px;color:#262626;transform:scaleX(0.9500);transform-origin:0 0;">4,646</div>
<div class="t" style="left:597.60px;top:659.83px;font-size:13.2px;color:#262626;">-</div>
<div class="t" style="left:764.62px;top:659.83px;font-size:13.2px;color:#262626;transform:scaleX(0.9500);transform-origin:0 0;">7,200</div>
<div class="t" style="left:852.64px;top:659.83px;font-size:13.2px;color:#262626;transform:scaleX(0.9500);transform-origin:0 0;">94,530</div>
<div class="t" style="left:1041.12px;top:659.83px;font-size:13.2px;color:#474747;">Conversion</div>
<div class="t" style="left:1154.05px;top:659.83px;font-size:13.2px;color:#262626;transform:scaleX(0.9500);transform-origin:0 0;">2030</div>
<div class="t" style="left:1241.67px;top:659.83px;font-size:13.2px;color:#262626;transform:scaleX(0.9500);transform-origin:0 0;">307,613</div>
<div class="t" style="left:1351.60px;top:659.83px;font-size:13.2px;color:#262626;">-</div>
<div class="t" style="left:94.10px;top:679.72px;font-size:13.33px;color:#666666;">78</div>
<div class="t" style="left:199.10px;top:679.72px;font-size:13.33px;color:#666666;">22</div>
<div class="t" style="left:962.53px;top:679.83px;font-size:13.2px;color:#262626;transform:scaleX(0.9500);transform-origin:0 0;">69</div>
<div class="t" style="left:288.05px;top:679.83px;font-size:13.2px;color:#262626;transform:scaleX(0.9500);transform-origin:0 0;">2031</div>
<div class="t" style="left:378.67px;top:679.83px;font-size:13.2px;color:#262626;transform:scaleX(0.9500);transform-origin:0 0;">100,202</div>
<div class="t" style="left:489.62px;top:679.83px;font-size:13.2px;color:#262626;transform:scaleX(0.9500);transform-origin:0 0;">4,555</div>
<div class="t" style="left:597.60px;top:679.83px;font-size:13.2px;color:#262626;">-</div>
<div class="t" style="left:764.62px;top:679.83px;font-size:13.2px;color:#262626;transform:scaleX(0.9500);transform-origin:0 0;">7,200</div>
<div class="t" style="left:852.64px;top:679.83px;font-size:13.2px;color:#262626;transform:scaleX(0.9500);transform-origin:0 0;">88,447</div>
<div class="t" style="left:1041.12px;top:679.83px;font-size:13.2px;color:#474747;">Conversion</div>
<div class="t" style="left:1154.05px;top:679.83px;font-size:13.2px;color:#262626;transform:scaleX(0.9500);transform-origin:0 0;">2031</div>
<div class="t" style="left:1241.67px;top:679.83px;font-size:13.2px;color:#262626;transform:scaleX(0.9500);transform-origin:0 0;">326,069</div>
<div class="t" style="left:1351.60px;top:679.83px;font-size:13.2px;color:#262626;">-</div>
<div class="t" style="left:94.10px;top:699.72px;font-size:13.33px;color:#666666;">79</div>
<div class="t" style="left:193.56px;top:699.72px;font-size:13.33px;color:#666666;">21.1</div>
<div class="t" style="left:962.53px;top:699.83px;font-size:13.2px;color:#262626;transform:scaleX(0.9500);transform-origin:0 0;">70</div>
<div class="t" style="left:288.05px;top:699.83px;font-size:13.2px;color:#262626;transform:scaleX(0.9500);transform-origin:0 0;">2032</div>
<div class="t" style="left:385.64px;top:699.83px;font-size:13.2px;color:#262626;transform:scaleX(0.9500);transform-origin:0 0;">93,754</div>
<div class="t" style="left:489.62px;top:699.83px;font-size:13.2px;color:#262626;transform:scaleX(0.9500);transform-origin:0 0;">4,444</div>
<div class="t" style="left:597.60px;top:699.83px;font-size:13.2px;color:#262626;">-</div>
<div class="t" style="left:764.62px;top:699.83px;font-size:13.2px;color:#262626;transform:scaleX(0.9500);transform-origin:0 0;">7,200</div>
<div class="t" style="left:853.58px;top:699.83px;font-size:13.2px;color:#262626;transform:scaleX(0.9500);transform-origin:0 0;">82,110</div>
<div class="t" style="left:1041.12px;top:699.83px;font-size:13.2px;color:#474747;">Conversion</div>
<div class="t" style="left:1154.05px;top:699.83px;font-size:13.2px;color:#262626;transform:scaleX(0.9500);transform-origin:0 0;">2032</div>
<div class="t" style="left:1241.67px;top:699.83px;font-size:13.2px;color:#262626;transform:scaleX(0.9500);transform-origin:0 0;">345,634</div>
<div class="t" style="left:1351.60px;top:699.83px;font-size:13.2px;color:#262626;">-</div>
<div class="t" style="left:1445.60px;top:699.83px;font-size:13.2px;color:#262626;">-</div>
<div class="t" style="left:94.10px;top:722.12px;font-size:13.33px;color:#666666;">80</div>
<div class="t" style="left:193.56px;top:722.12px;font-size:13.33px;color:#666666;">20.2</div>
<div class="t" style="left:962.53px;top:724.83px;font-size:13.2px;color:#262626;transform:scaleX(0.9500);transform-origin:0 0;">71</div>
<div class="t" style="left:288.05px;top:724.83px;font-size:13.2px;color:#262626;transform:scaleX(0.9500);transform-origin:0 0;">2033</div>
<div class="t" style="left:385.64px;top:724.83px;font-size:13.2px;color:#262626;transform:scaleX(0.9500);transform-origin:0 0;">87,037</div>
<div class="t" style="left:489.62px;top:724.83px;font-size:13.2px;color:#262626;transform:scaleX(0.9500);transform-origin:0 0;">4,309</div>
<div class="t" style="left:597.60px;top:724.83px;font-size:13.2px;color:#262626;">-</div>
<div class="t" style="left:764.62px;top:724.83px;font-size:13.2px;color:#262626;transform:scaleX(0.9500);transform-origin:0 0;">7,200</div>
<div class="t" style="left:852.64px;top:724.83px;font-size:13.2px;color:#262626;transform:scaleX(0.9500);transform-origin:0 0;">75,528</div>
<div class="t" style="left:1041.12px;top:724.83px;font-size:13.2px;color:#474747;">Conversion</div>
<div class="t" style="left:1154.05px;top:724.83px;font-size:13.2px;color:#262626;transform:scaleX(0.9500);transform-origin:0 0;">2033</div>
<div class="t" style="left:1241.67px;top:724.83px;font-size:13.2px;color:#262626;transform:scaleX(0.9500);transform-origin:0 0;">366,372</div>
<div class="t" style="left:1351.60px;top:724.83px;font-size:13.2px;color:#262626;">-</div>
<div class="t" style="left:1445.60px;top:724.83px;font-size:13.2px;color:#262626;">-</div>
<div class="t" style="left:94.10px;top:744.72px;font-size:13.33px;color:#666666;">81</div>
<div class="t" style="left:193.56px;top:744.72px;font-size:13.33px;color:#666666;">19.4</div>
<div class="t" style="left:962.10px;top:744.72px;font-size:13.33px;color:#666666;">72</div>
<div class="t" style="left:288.05px;top:744.83px;font-size:13.2px;color:#262626;transform:scaleX(0.9500);transform-origin:0 0;">2034</div>
<div class="t" style="left:385.64px;top:744.83px;font-size:13.2px;color:#262626;transform:scaleX(0.9500);transform-origin:0 0;">80,059</div>
<div class="t" style="left:489.62px;top:744.83px;font-size:13.2px;color:#262626;transform:scaleX(0.9500);transform-origin:0 0;">4,127</div>
<div class="t" style="left:597.60px;top:744.83px;font-size:13.2px;color:#262626;">-</div>
<div class="t" style="left:764.62px;top:744.83px;font-size:13.2px;color:#262626;transform:scaleX(0.9500);transform-origin:0 0;">7,200</div>
<div class="t" style="left:852.64px;top:744.83px;font-size:13.2px;color:#262626;transform:scaleX(0.9500);transform-origin:0 0;">68,732</div>
<div class="t" style="left:1061.56px;top:744.72px;font-size:13.33px;color:#666666;">27.4</div>
<div class="t" style="left:1154.05px;top:744.83px;font-size:13.2px;color:#262626;transform:scaleX(0.9500);transform-origin:0 0;">2034</div>
<div class="t" style="left:1241.67px;top:744.83px;font-size:13.2px;color:#262626;transform:scaleX(0.9500);transform-origin:0 0;">388,354</div>
<div class="t" style="left:1332.64px;top:744.83px;font-size:13.2px;color:#262626;transform:scaleX(0.9500);transform-origin:0 0;">14,174</div>
<div class="t" style="left:1426.64px;top:744.83px;font-size:13.2px;color:#262626;transform:scaleX(0.9500);transform-origin:0 0;">14,174</div>
<div class="t" style="left:94.10px;top:764.72px;font-size:13.33px;color:#666666;">82</div>
<div class="t" style="left:193.56px;top:764.72px;font-size:13.33px;color:#666666;">18.5</div>
<div class="t" style="left:962.10px;top:764.72px;font-size:13.33px;color:#666666;">73</div>
<div class="t" style="left:288.05px;top:764.83px;font-size:13.2px;color:#262626;transform:scaleX(0.9500);transform-origin:0 0;">2035</div>
<div class="t" style="left:385.64px;top:764.83px;font-size:13.2px;color:#262626;transform:scaleX(0.9500);transform-origin:0 0;">72,856</div>
<div class="t" style="left:489.62px;top:764.83px;font-size:13.2px;color:#262626;transform:scaleX(0.9500);transform-origin:0 0;">3,939</div>
<div class="t" style="left:597.60px;top:764.83px;font-size:13.2px;color:#262626;">-</div>
<div class="t" style="left:764.62px;top:764.83px;font-size:13.2px;color:#262626;transform:scaleX(0.9500);transform-origin:0 0;">7,200</div>
<div class="t" style="left:852.64px;top:764.83px;font-size:13.2px;color:#262626;transform:scaleX(0.9500);transform-origin:0 0;">61,717</div>
<div class="t" style="left:1061.56px;top:764.72px;font-size:13.33px;color:#666666;">26.5</div>
<div class="t" style="left:1154.05px;top:764.83px;font-size:13.2px;color:#262626;transform:scaleX(0.9500);transform-origin:0 0;">2035</div>
<div class="t" style="left:1241.67px;top:764.83px;font-size:13.2px;color:#262626;transform:scaleX(0.9500);transform-origin:0 0;">396,631</div>
<div class="t" style="left:1332.64px;top:764.83px;font-size:13.2px;color:#262626;transform:scaleX(0.9500);transform-origin:0 0;">14,968</div>
<div class="t" style="left:1426.64px;top:764.83px;font-size:13.2px;color:#262626;transform:scaleX(0.9500);transform-origin:0 0;">14,968</div>
<div style="left:1516px;top:184px;width:20px;height:595px;background:#e6e6e6;"></div>
<div style="left:1515px;top:204px;width:1px;height:575px;background:#c6c6c6;"></div>
<div style="left:1518px;top:187px;width:15px;height:14px;background:#fff;box-shadow:0 0 0 1px #a8a8a8"></div>
<svg style="left:1521px;top:191px" width="9" height="5" viewBox="0 0 9 5"><path d="M0 5h9L4.5 0z" fill="#555"/></svg>
<div style="left:1518px;top:203px;width:15px;height:127px;background:#fff;box-shadow:0 0 0 1px #a8a8a8"></div>
<div style="left:1518px;top:764px;width:15px;height:14px;background:#fff;box-shadow:0 0 0 1px #a8a8a8"></div>
<svg style="left:1521px;top:769px" width="9" height="5" viewBox="0 0 9 5"><path d="M0 0h9L4.5 5z" fill="#555"/></svg>
<div style="left:0px;top:779px;width:1536px;height:23px;background:#e6e6e6;"></div>
<div style="left:0px;top:779px;width:1536px;height:1px;background:#c6c6c6;"></div>
<svg style="left:22px;top:786px" width="6" height="9" viewBox="0 0 6 9"><path d="M5 0v9L0 4.5z" fill="#d0d0d0"/></svg>
<svg style="left:44px;top:786px" width="6" height="9" viewBox="0 0 6 9"><path d="M0 0v9l5-4.5z" fill="#c4c4c4"/></svg>
<div style="left:83px;top:779px;width:51px;height:21px;background:#fff;"></div>
<div style="left:83px;top:779px;width:1px;height:21px;background:#c8c8c8;"></div>
<div style="left:133px;top:779px;width:1px;height:21px;background:#c8c8c8;"></div>
<div style="left:83px;top:798px;width:51px;height:2px;background:#217346;"></div>
<div class="t" style="left:93.50px;top:781.57px;font-size:13.5px;color:#1e6e42;font-weight:bold;transform:scaleX(0.9758);transform-origin:0 0;">RMD</div>
<div class="t" style="left:144.50px;top:781.57px;font-size:13.5px;color:#6a6a6a;transform:scaleX(1.0168);transform-origin:0 0;">Investments</div>
<div style="left:229px;top:783px;width:1px;height:15px;background:#bbb;"></div>
<svg style="left:255px;top:782px" width="17" height="17" viewBox="0 0 17 17" fill="none" stroke="#666" stroke-width="1.1"><circle cx="8.5" cy="8.5" r="7.5"/><path d="M8.5 4.5v8M4.5 8.5h8"/></svg>
<div style="left:919px;top:785px;width:2px;height:2px;background:#b0b0b0;"></div>
<div style="left:919px;top:789px;width:2px;height:2px;background:#b0b0b0;"></div>
<div style="left:919px;top:793px;width:2px;height:2px;background:#b0b0b0;"></div>
<div style="left:934px;top:784px;width:14px;height:13px;background:#fff;box-shadow:0 0 0 1px #a8a8a8"></div>
<svg style="left:938px;top:787px" width="5" height="8" viewBox="0 0 5 8"><path d="M5 0v8L0 4z" fill="#555"/></svg>
<div style="left:949px;top:784px;width:384px;height:13px;background:#fff;box-shadow:0 0 0 1px #a8a8a8"></div>
<div style="left:1500px;top:784px;width:14px;height:13px;background:#fff;box-shadow:0 0 0 1px #a8a8a8"></div>
<svg style="left:1505px;top:787px" width="5" height="8" viewBox="0 0 5 8"><path d="M0 0v8l5-4z" fill="#555"/></svg>
<div style="left:0px;top:802px;width:1536px;height:21px;background:#f3f2f1;"></div>
<div style="left:0px;top:802px;width:1536px;height:1px;background:#dcdcdc;"></div>
<div class="t" style="left:8.00px;top:806.84px;font-size:12px;color:#666;transform:scaleX(0.8360);transform-origin:0 0;">Ready</div>
<svg style="left:55px;top:805px" width="16" height="15" viewBox="0 0 16 15" fill="none" stroke="#555" stroke-width="1.1"><circle cx="6" cy="2.5" r="1.6"/><path d="M1 5.5h10M6 5.5v4l-3 4M6 9.5l2 2"/><path d="M9 12l2 2 4-5"/></svg>
<div class="t" style="left:73.00px;top:806.84px;font-size:12px;color:#666;transform:scaleX(0.8828);transform-origin:0 0;">Accessibility: Good to go</div>
<div style="left:1241px;top:803px;width:38px;height:20px;background:#d8d8d8;"></div>
<svg style="left:1252px;top:805px" width="15" height="15" viewBox="0 0 15 15" fill="none" stroke="#555" stroke-width="1.2"><rect x="1" y="1" width="13" height="13"/><path d="M1 5.3h13M1 9.6h13M5.3 1v13M9.6 1v13"/></svg>
<svg style="left:1291px;top:805px" width="15" height="15" viewBox="0 0 15 15" fill="none" stroke="#555" stroke-width="1.2"><rect x="1" y="1" width="13" height="13"/><rect x="4.5" y="3.5" width="6" height="8"/></svg>
<svg style="left:1331px;top:805px" width="15" height="15" viewBox="0 0 15 15" fill="none" stroke="#555" stroke-width="1.2"><path d="M1 1h13v13H1zM5 1v5M9.5 1v5M1 9h6V6"/></svg>
<div style="left:1365px;top:812px;width:8px;height:1px;background:#777;"></div>
<div style="left:1376px;top:812px;width:100px;height:1px;background:#888;"></div>
<div style="left:1424px;top:806px;width:5px;height:12px;background:#666;"></div>
<div style="left:1480px;top:812px;width:8px;height:1px;background:#777;"></div>
<div style="left:1483.5px;top:808px;width:1.0px;height:9px;background:#777;"></div>
<div class="t" style="left:1503.00px;top:807.69px;font-size:11px;color:#666;transform:scaleX(0.8530);transform-origin:0 0;">100%</div>
<div style="left:0px;top:823px;width:1536px;height:4px;background:#1e2a2f;"></div>
</body></html>
